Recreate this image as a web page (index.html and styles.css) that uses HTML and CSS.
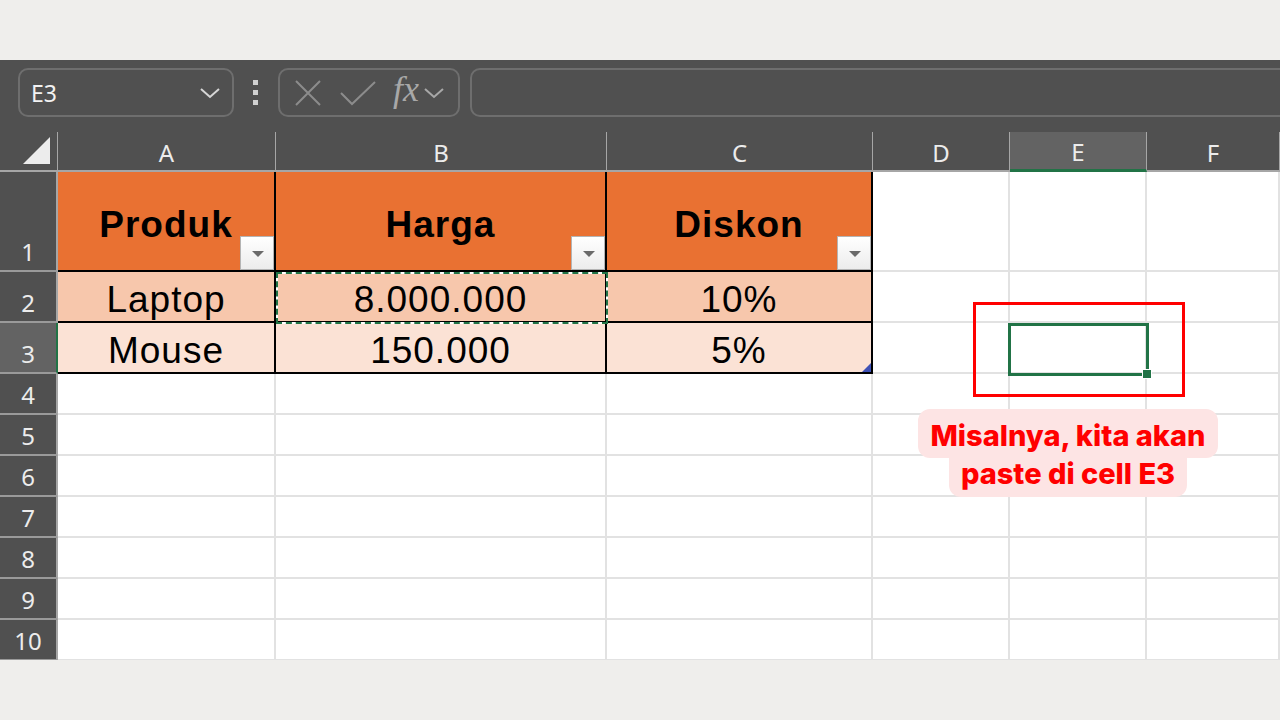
FILE: index.html
```html
<!DOCTYPE html>
<html lang="id">
<head>
    <meta charset="UTF-8">
    <meta name="viewport" content="width=device-width, initial-scale=1.0">
    <title>Paste di cell E3</title>
    <link rel="stylesheet" href="styles.css">
</head>
<body>

<div class="band"></div>

<div class="excel">
    <div class="toolbar">
        <div class="namebox">
            <span>E3</span>
            <svg width="22" height="14" viewBox="0 0 22 14"><path d="M2 3 L11 11 L20 3" fill="none" stroke="#d6d6d6" stroke-width="2"/></svg>
        </div>
        <div class="dots">
            <svg width="8" height="28" viewBox="0 0 8 28"><rect x="1" y="1" width="5" height="5" fill="#d0d0d0"/><rect x="1" y="11" width="5" height="5" fill="#d0d0d0"/><rect x="1" y="21" width="5" height="5" fill="#d0d0d0"/></svg>
        </div>
        <div class="fxbox">
            <svg width="30" height="30" viewBox="0 0 30 30"><path d="M3 3 L27 27 M27 3 L3 27" stroke="#8c8c8c" stroke-width="2"/></svg>
            <svg width="38" height="30" viewBox="0 0 38 30"><path d="M2 15 L13 26 L36 4" fill="none" stroke="#8c8c8c" stroke-width="2"/></svg>
            <span class="fx">fx</span>
            <svg width="22" height="14" viewBox="0 0 22 14"><path d="M2 3 L11 11 L20 3" fill="none" stroke="#a8a8a8" stroke-width="2"/></svg>
        </div>
        <div class="formula"></div>
    </div>

    <div class="sheet">
        <!-- baris judul kolom -->
        <div class="corner"><svg width="28" height="27" viewBox="0 0 28 27"><path d="M27 0 L27 27 L0 27 Z" fill="#ececec"/></svg></div>
        <div class="colhead">A</div>
        <div class="colhead">B</div>
        <div class="colhead">C</div>
        <div class="colhead">D</div>
        <div class="colhead active">E</div>
        <div class="colhead">F</div>

        <div class="rowhead">1</div>
        <div class="cell th">Produk<span class="filter"></span></div>
        <div class="cell th">Harga<span class="filter"></span></div>
        <div class="cell th">Diskon<span class="filter"></span></div>
        <div class="cell"></div><div class="cell"></div><div class="cell"></div>

        <div class="rowhead">2</div>
        <div class="cell td dark">Laptop</div>
        <div class="cell td dark">8.000.000</div>
        <div class="cell td dark">10%</div>
        <div class="cell"></div><div class="cell"></div><div class="cell"></div>

        <div class="rowhead active">3</div>
        <div class="cell td light">Mouse</div>
        <div class="cell td light">150.000</div>
        <div class="cell td light">5%<span class="resize"></span></div>
        <div class="cell"></div><div class="cell"></div><div class="cell"></div>

        <div class="rowhead">4</div>
        <div class="cell"></div><div class="cell"></div><div class="cell"></div><div class="cell"></div><div class="cell"></div><div class="cell"></div>
        <div class="rowhead">5</div>
        <div class="cell"></div><div class="cell"></div><div class="cell"></div><div class="cell"></div><div class="cell"></div><div class="cell"></div>
        <div class="rowhead">6</div>
        <div class="cell"></div><div class="cell"></div><div class="cell"></div><div class="cell"></div><div class="cell"></div><div class="cell"></div>
        <div class="rowhead">7</div>
        <div class="cell"></div><div class="cell"></div><div class="cell"></div><div class="cell"></div><div class="cell"></div><div class="cell"></div>
        <div class="rowhead">8</div>
        <div class="cell"></div><div class="cell"></div><div class="cell"></div><div class="cell"></div><div class="cell"></div><div class="cell"></div>
        <div class="rowhead">9</div>
        <div class="cell"></div><div class="cell"></div><div class="cell"></div><div class="cell"></div><div class="cell"></div><div class="cell"></div>
        <div class="rowhead">10</div>
        <div class="cell"></div><div class="cell"></div><div class="cell"></div><div class="cell"></div><div class="cell"></div><div class="cell"></div>
    </div>

    <!-- penanda di atas lembar kerja -->
    <div class="marquee"></div>
    <div class="selected"><span class="handle"></span></div>
    <div class="redbox"></div>
    <div class="callout">
        <span class="line one">Misalnya, kita akan</span>
        <span class="line two">paste di cell E3</span>
    </div>
</div>

<div class="band"></div>

</body>
</html>
```

FILE: styles.css
```css
body {
    margin: 0;
    padding: 0;
    background-color: #efeeec;
    font-family: "Liberation Sans", Arial, sans-serif;
}
.band {
    height: 60px;
}
.excel {
    position: relative;
    height: 600px;
    overflow: hidden;
    background-color: #505050;
}
.toolbar {
    display: flex;
    align-items: flex-start;
    height: 72px;
    padding: 8px 0 0 18px;
    box-sizing: border-box;
}
.namebox {
    display: flex;
    align-items: center;
    justify-content: space-between;
    width: 216px;
    height: 49px;
    box-sizing: border-box;
    padding: 0 11px 0 11px;
    border: 2px solid #6e6e6e;
    border-radius: 10px;
    color: #f2f2f2;
    font-family: "Noto Sans", sans-serif;
    font-size: 23px;
}
.dots {
    display: flex;
    align-items: center;
    height: 49px;
    width: 44px;
    justify-content: center;
}
.fxbox {
    display: flex;
    align-items: center;
    gap: 16px;
    width: 182px;
    height: 49px;
    box-sizing: border-box;
    padding: 0 4px 0 13px;
    border: 2px solid #6e6e6e;
    border-radius: 10px;
}
.fxbox .fx {
    font-family: "Liberation Serif", serif;
    font-style: italic;
    font-size: 36px;
    color: #a8a8a8;
    margin: -8px -12px 0 0;
}
.formula {
    flex: 1;
    height: 49px;
    box-sizing: border-box;
    margin-left: 10px;
    margin-right: -20px;
    border: 2px solid #6e6e6e;
    border-radius: 10px;
}
.sheet {
    display: grid;
    grid-template-columns: 58px 218px 331px 266px 137px 137px 1fr;
    grid-template-rows: 40px 100px 51px 51px repeat(7, 41px);
}
.corner {
    display: flex;
    align-items: flex-end;
    justify-content: flex-end;
    padding: 0 6px 6px 0;
    border-right: 1px solid #a6a6a6;
    border-bottom: 2px solid #a6a6a6;
}
.colhead {
    display: flex;
    align-items: center;
    justify-content: center;
    padding-top: 2px;
    color: #ececec;
    font-family: "Noto Sans", sans-serif;
    font-size: 24px;
    border-right: 1px solid #a6a6a6;
    border-bottom: 2px solid #a6a6a6;
}
.colhead.active {
    background-color: #636363;
    border-bottom: 3px solid #217346;
}
.rowhead {
    display: flex;
    align-items: flex-end;
    justify-content: center;
    padding-bottom: 3px;
    color: #ececec;
    font-family: "Noto Sans", sans-serif;
    font-size: 24px;
    line-height: 1.2;
    border-right: 2px solid #a6a6a6;
    border-bottom: 2px solid #9a9a9a;
}
.rowhead.active {
    background-color: #636363;
    border-right-color: #217346;
}
.cell {
    position: relative;
    background-color: #fff;
    border-right: 2px solid #e2e2e2;
    border-bottom: 2px solid #e2e2e2;
}
.th, .td {
    display: flex;
    align-items: center;
    justify-content: center;
    border-right: 2px solid #000;
    border-bottom: 2px solid #000;
    color: #000;
    font-size: 37px;
    letter-spacing: 1px;
    line-height: 1;
}
.th {
    background-color: #e97132;
    font-weight: bold;
    padding-top: 6px;
}
.td {
    padding-top: 5px;
}
.td.dark {
    background-color: #f7c7ac;
}
.td.light {
    background-color: #fbe2d5;
}
.filter {
    position: absolute;
    right: 0;
    bottom: 0;
    width: 34px;
    height: 34px;
    box-sizing: border-box;
    border: 1px solid #b4b4b4;
    background: linear-gradient(#ffffff, #ececec);
}
.filter::after {
    content: "";
    position: absolute;
    left: 11px;
    top: 14px;
    border-left: 6px solid transparent;
    border-right: 6px solid transparent;
    border-top: 6px solid #6a6a6a;
}
.resize {
    position: absolute;
    right: 0;
    bottom: 0;
    width: 0;
    height: 0;
    border-left: 9px solid transparent;
    border-bottom: 9px solid #3f51b5;
}
.marquee {
    position: absolute;
    left: 276px;
    top: 212px;
    width: 332px;
    height: 52px;
    box-sizing: border-box;
    border: 2px solid #fff;
}
.marquee::before {
    content: "";
    position: absolute;
    inset: -2px;
    border: 2px dashed #217346;
}
.selected {
    position: absolute;
    left: 1008px;
    top: 263px;
    width: 141px;
    height: 53px;
    box-sizing: border-box;
    border: 3px solid #217346;
}
.handle {
    position: absolute;
    right: -6px;
    bottom: -6px;
    width: 8px;
    height: 8px;
    background-color: #217346;
    border: 1px solid #fff;
}
.redbox {
    position: absolute;
    left: 973px;
    top: 242px;
    width: 212px;
    height: 95px;
    box-sizing: border-box;
    border: 3px solid #ff0000;
}
.callout {
    position: absolute;
    left: 868px;
    top: 349px;
    width: 400px;
    display: flex;
    flex-direction: column;
    align-items: center;
    font-family: Inter, sans-serif;
    font-weight: 800;
    color: #ff0000;
    font-size: 29px;
}
.line {
    display: block;
    background-color: #fde4e4;
    border-radius: 12px;
    padding: 0 12px;
}
.line.one {
    height: 49px;
    line-height: 54px;
}
.line.two {
    height: 39px;
    line-height: 32px;
    border-radius: 0 0 12px 12px;
}
```
